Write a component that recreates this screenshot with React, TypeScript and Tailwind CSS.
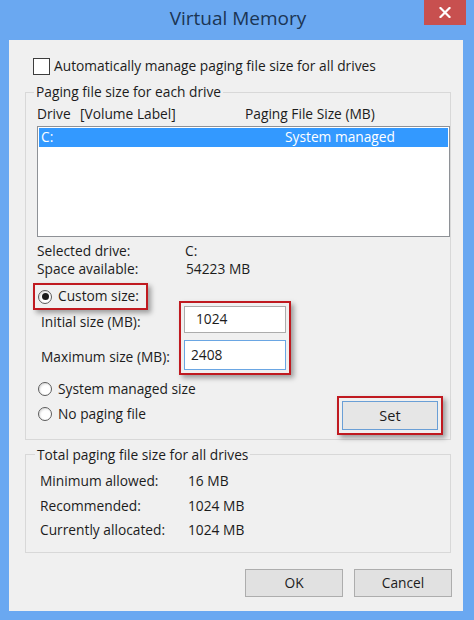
import React from "react";

function Radio({ checked }: { checked?: boolean }) {
  return (
    <span className="w-[14px] h-[14px] rounded-full border border-[#5b5b5b] bg-white flex items-center justify-center shrink-0 shadow-[inset_1px_1px_2px_rgba(0,0,0,0.15)]">
      {checked && <span className="w-[7px] h-[7px] rounded-full bg-[#1b1b1b]" />}
    </span>
  );
}

const redBox =
  "border-2 border-[#c01a20] shadow-[3px_3px_5px_rgba(0,0,0,0.35)]";

export default function App() {
  return (
    <div className="w-[474px] h-[620px] bg-[#6aa8f1] flex flex-col font-['Open_Sans','Noto_Sans',sans-serif] text-[13.75px] text-[#1c1c1c] overflow-hidden">
      {/* Title bar */}
      <div className="relative h-[40px] shrink-0 flex justify-center">
        <div className="h-[36px] flex items-center text-[19px] text-[#1b3554] pl-[2px]">
          Virtual Memory
        </div>
        <div className="absolute right-[8px] top-0 w-[42px] h-[25px] bg-[#c8504f] flex items-center justify-center">
          <svg width="12" height="11" viewBox="0 0 12 11">
            <path d="M1.5 1 L10.5 10 M10.5 1 L1.5 10" stroke="#ffffff" strokeWidth="2.2" strokeLinecap="square" />
          </svg>
        </div>
      </div>

      {/* Content */}
      <div className="ml-[9px] mr-[11px] mb-[9px] flex-1 bg-[#f0f0f0] flex flex-col">
        {/* checkbox */}
        <div className="mt-[18px] ml-[24px] h-[17px] flex items-center gap-[4px]">
          <span className="w-[17px] h-[17px] border border-[#3d3d3d] bg-white shrink-0" />
          <span>Automatically manage paging file size for all drives</span>
        </div>

        {/* Group 1 */}
        <div className="relative mt-[17px] ml-[16px] mr-[12px] border border-[#d8d8d8] pl-[11px] pb-[4px] flex flex-col">
          <div className="absolute top-[-10px] left-[8px] px-[2px] h-[18px] leading-[18px] bg-[#f0f0f0]">
            Paging file size for each drive
          </div>
          <div className="mt-[12px] h-[18px] flex items-center">
            <span className="w-[43px]">Drive</span>
            <span className="w-[165px]">[Volume Label]</span>
            <span>Paging File Size (MB)</span>
          </div>
          <div className="mt-[3px] h-[111px] border border-[#8e9196] bg-white p-[1px]">
            <div className="h-[19px] bg-[#3399ff] text-white flex items-center pl-[2px]">
              <span className="w-[244px]">C:</span>
              <span>System managed</span>
            </div>
          </div>
          <div className="mt-[5px] h-[18px] flex items-center">
            <span className="w-[148px]">Selected drive:</span>
            <span>C:</span>
          </div>
          <div className="h-[18px] flex items-center">
            <span className="w-[149px]">Space available:</span>
            <span>54223 MB</span>
          </div>

          {/* Custom size */}
          <div className={`mt-[5px] -ml-[4px] self-start w-[115px] h-[27px] flex items-center pl-[3px] gap-[6px] ${redBox}`}>
            <Radio checked />
            <span>Custom size:</span>
          </div>

          {/* Inputs */}
          <div className="-mt-[9px] flex">
            <div className="w-[142px] pl-[4px] flex flex-col">
              <div className="mt-[12px] h-[18px] flex items-center">Initial size (MB):</div>
              <div className="mt-[17px] h-[18px] flex items-center">Maximum size (MB):</div>
            </div>
            <div className={`w-[112px] p-[3px] flex flex-col gap-[7px] ${redBox}`}>
              <div className="h-[27px] border border-[#acacac] bg-white flex items-center pl-[11px]">1024</div>
              <div className="h-[30px] border border-[#6aa6e3] bg-white flex items-center pl-[6px]">2408</div>
            </div>
          </div>

          {/* Radios + Set */}
          <div className="mt-[5px] flex">
            <div className="flex flex-col pl-[1px]">
              <div className="h-[18px] flex items-center gap-[6px]">
                <Radio />
                <span>System managed size</span>
              </div>
              <div className="mt-[7px] h-[18px] flex items-center gap-[6px]">
                <Radio />
                <span>No paging file</span>
              </div>
            </div>
            <div className={`ml-auto mr-[7px] mt-[16px] w-[106px] h-[39px] p-[3px] ${redBox}`}>
              <div className="h-full border border-[#6a9fd6] bg-[#e6e6e6] flex items-center justify-center text-[14.5px]">Set</div>
            </div>
          </div>
        </div>

        {/* Group 2 */}
        <div className="relative mt-[14px] ml-[16px] mr-[12px] border border-[#d8d8d8] pl-[14px] pb-[13px] flex flex-col">
          <div className="absolute top-[-9px] left-[9px] px-[2px] h-[18px] leading-[18px] bg-[#f0f0f0]">
            Total paging file size for all drives
          </div>
          <div className="mt-[17px] h-[18px] flex items-center">
            <span className="w-[148px]">Minimum allowed:</span>
            <span>16 MB</span>
          </div>
          <div className="mt-[7px] h-[18px] flex items-center">
            <span className="w-[148px]">Recommended:</span>
            <span>1024 MB</span>
          </div>
          <div className="mt-[6px] h-[18px] flex items-center">
            <span className="w-[148px]">Currently allocated:</span>
            <span>1024 MB</span>
          </div>
        </div>

        {/* Buttons */}
        <div className="mt-[16px] mr-[11px] flex justify-end gap-[11px]">
          <div className="w-[98px] h-[28px] border border-[#adadad] bg-[#e1e1e1] flex items-center justify-center">OK</div>
          <div className="w-[98px] h-[28px] border border-[#adadad] bg-[#e1e1e1] flex items-center justify-center">Cancel</div>
        </div>
      </div>
    </div>
  );
}
